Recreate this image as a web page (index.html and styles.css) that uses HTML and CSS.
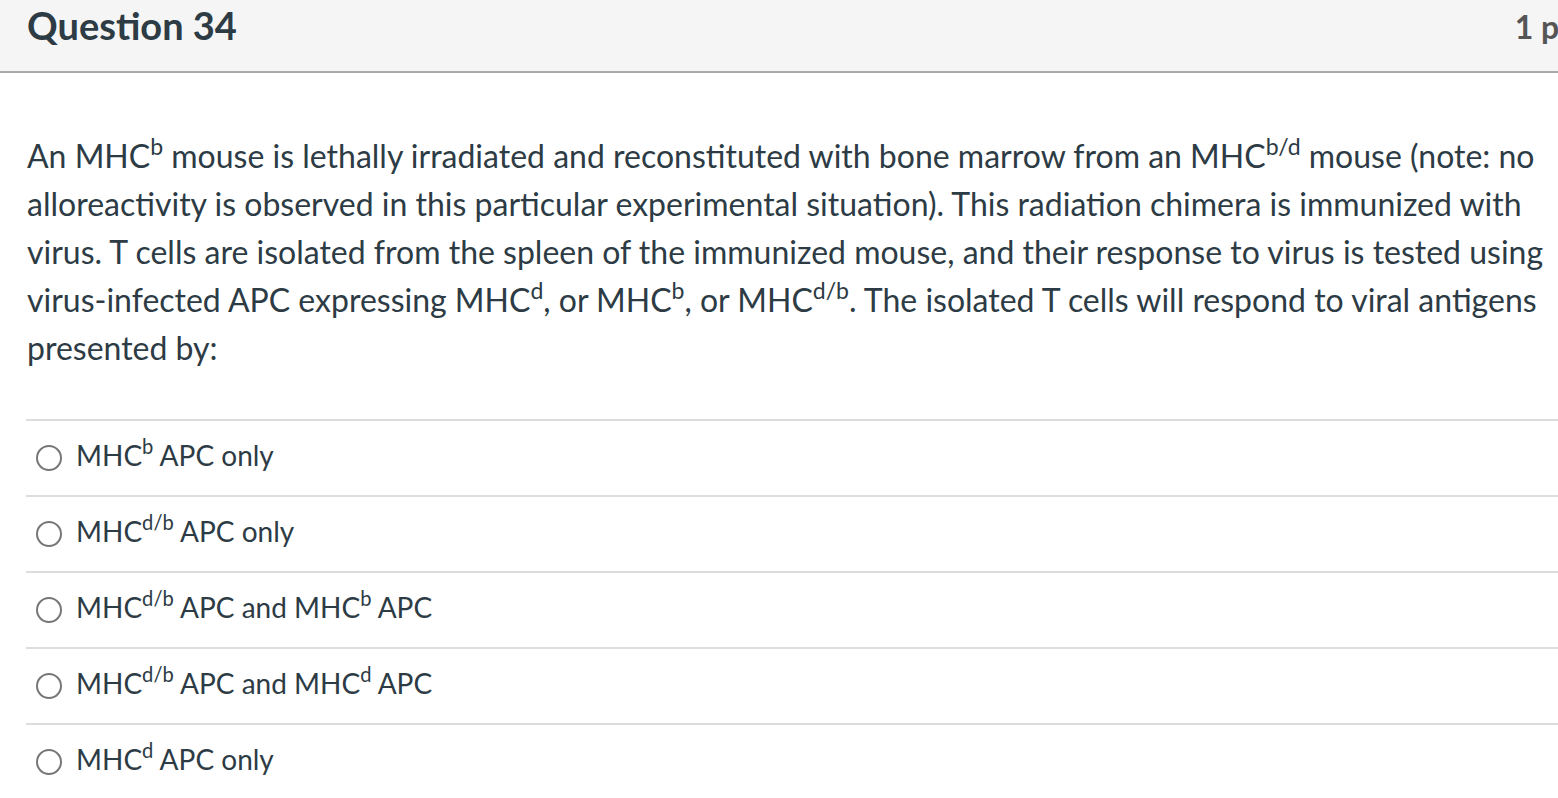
FILE: index.html
```html
<!DOCTYPE html>
<html lang="en">
<head>
<meta charset="utf-8">
<title>Question 34</title>
<link rel="stylesheet" href="styles.css">
</head>
<body>
<div class="question">
  <div class="question-header">
    <h2 class="question-title">Question 34</h2>
    <span class="points">1 pts</span>
  </div>
  <div class="question-text">
    An MHC<sup>b</sup> mouse is lethally irradiated and reconstituted with bone marrow from an MHC<sup>b/d</sup> mouse (note: no alloreactivity is observed in this particular experimental situation). This radiation chimera is immunized with virus. T cells are isolated from the spleen of the immunized mouse, and their response to virus is tested using virus-infected APC expressing MHC<sup>d</sup>, or MHC<sup>b</sup>, or MHC<sup>d/b</sup>. The isolated T cells will respond to viral antigens presented by:
  </div>
  <div class="answers">
    <label class="answer"><span class="radio"></span><span class="answer-text">MHC<sup>b</sup> APC only</span></label>
    <label class="answer"><span class="radio"></span><span class="answer-text">MHC<sup>d/b</sup> APC only</span></label>
    <label class="answer"><span class="radio"></span><span class="answer-text">MHC<sup>d/b</sup> APC and MHC<sup>b</sup> APC</span></label>
    <label class="answer"><span class="radio"></span><span class="answer-text">MHC<sup>d/b</sup> APC and MHC<sup>d</sup> APC</span></label>
    <label class="answer"><span class="radio"></span><span class="answer-text">MHC<sup>d</sup> APC only</span></label>
  </div>
</div>
</body>
</html>
```

FILE: styles.css
```css
html, body {
  margin: 0;
  padding: 0;
  background: #ffffff;
  overflow: hidden;
}

body {
  font-family: Lato, "Noto Sans", sans-serif;
  color: #2d3b45;
}

.question-header {
  display: flex;
  justify-content: space-between;
  align-items: flex-start;
  height: 73px;
  background: #f5f5f5;
  border-bottom: 2px solid #aaaaaa;
  padding: 3px 0 0 27px;
  box-sizing: border-box;
  overflow: hidden;
}

.question-title {
  margin: 0;
  font-size: 38px;
  line-height: 1.2;
  font-weight: 700;
  color: #2d3b45;
}

.points {
  font-size: 32px;
  line-height: 1.2;
  font-weight: 700;
  color: #555555;
  padding-top: 5px;
  margin-right: -27px;
  white-space: nowrap;
}

.question-text {
  padding: 59px 14px 0 27px;
  font-size: 32px;
  line-height: 48px;
}

.question-text sup,
.answer-text sup {
  font-size: 0.72em;
  line-height: 0;
  vertical-align: 0.58em;
}

.answers {
  margin: 47px 0 0 26px;
}

.answer {
  display: flex;
  align-items: center;
  height: 76px;
  border-top: 2px solid #dddddd;
  box-sizing: border-box;
  padding: 0 0 0 10px;
}

.radio {
  width: 26px;
  height: 26px;
  border: 2px solid #777777;
  border-radius: 50%;
  box-sizing: border-box;
  flex-shrink: 0;
  margin-right: 14px;
}

.answer-text {
  font-size: 28px;
  line-height: 40px;
  padding-bottom: 6px;
}
```
